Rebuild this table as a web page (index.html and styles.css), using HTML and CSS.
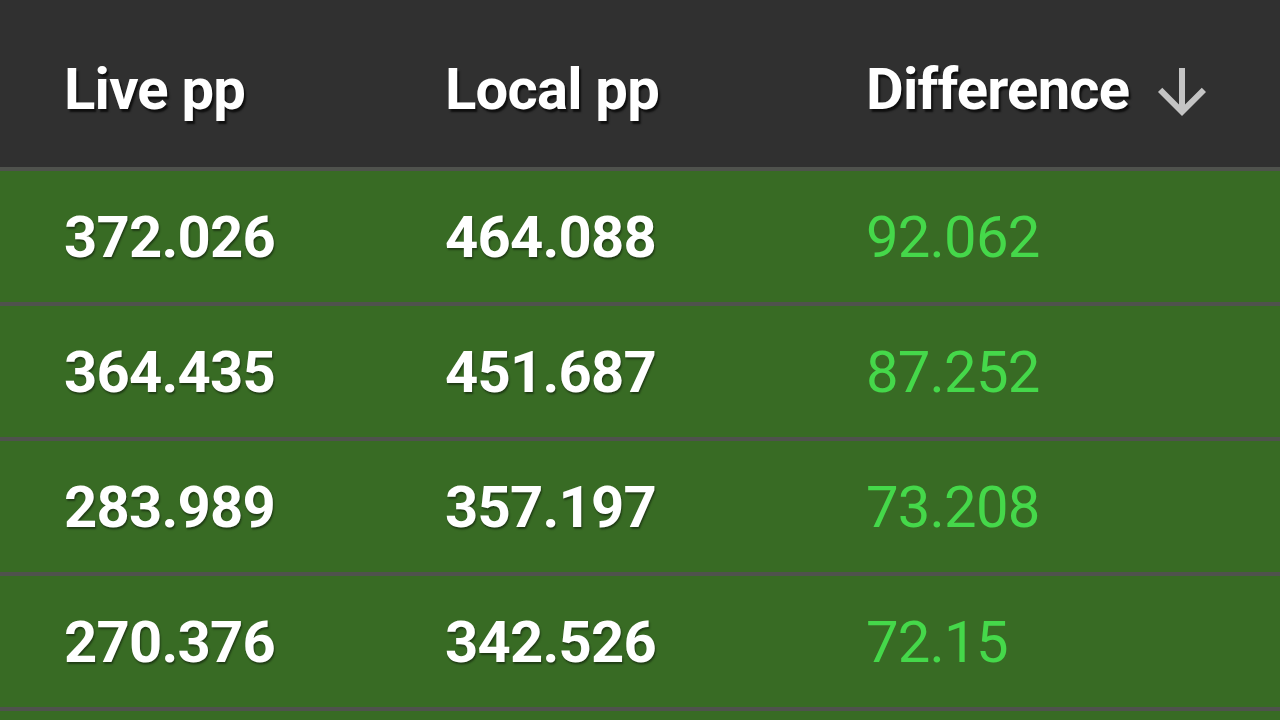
FILE: index.html
```html
<!DOCTYPE html>
<html>
<head>
<meta charset="utf-8">
<link rel="stylesheet" href="styles.css">
</head>
<body>
<div class="table">
  <div class="row head">
    <div class="cell">Live pp</div>
    <div class="cell">Local pp</div>
    <div class="cell sort">Difference
      <svg class="arrow" viewBox="0 0 24 24" width="72" height="72"><path d="M20 12l-1.41-1.41L13 16.17V4h-2v12.17l-5.58-5.59L4 12l8 8 8-8z"/></svg>
    </div>
  </div>
  <div class="row">
    <div class="cell">372.026</div>
    <div class="cell">464.088</div>
    <div class="cell diff">92.062</div>
  </div>
  <div class="row">
    <div class="cell">364.435</div>
    <div class="cell">451.687</div>
    <div class="cell diff">87.252</div>
  </div>
  <div class="row">
    <div class="cell">283.989</div>
    <div class="cell">357.197</div>
    <div class="cell diff">73.208</div>
  </div>
  <div class="row last">
    <div class="cell">270.376</div>
    <div class="cell">342.526</div>
    <div class="cell diff">72.15</div>
  </div>
</div>
</body>
</html>
```
FILE: styles.css
```css
html, body {
  margin: 0;
  padding: 0;
  background: #386b24;
  overflow: hidden;
}
.table {
  width: 1280px;
  font-family: Roboto, "Liberation Sans", sans-serif;
}
.row {
  display: grid;
  grid-template-columns: 381px 421px 1fr;
  padding-left: 64px;
  height: 131px;
  align-items: center;
  background: #386b24;
  border-top: 4px solid #4f524d;
  color: #ffffff;
  font-weight: 700;
  font-size: 58px;
  letter-spacing: -0.8px;
  text-shadow: 1px 2px 2px rgba(0, 0, 0, 0.45);
}
.row.last {
  border-bottom: 4px solid #4f524d;
}
.row.head {
  height: 167px;
  border-top: none;
  background: #303030;
  padding-top: 10px;
  box-sizing: border-box;
  text-shadow: 2px 3px 2px rgba(0, 0, 0, 0.7);
}
.cell {
  white-space: nowrap;
}
.sort {
  display: flex;
  align-items: center;
}
.arrow {
  fill: #c4c4c4;
  margin-left: 17px;
  margin-top: 6px;
}
.diff {
  color: #45d84a;
  font-weight: 400;
  text-shadow: none;
}
```
